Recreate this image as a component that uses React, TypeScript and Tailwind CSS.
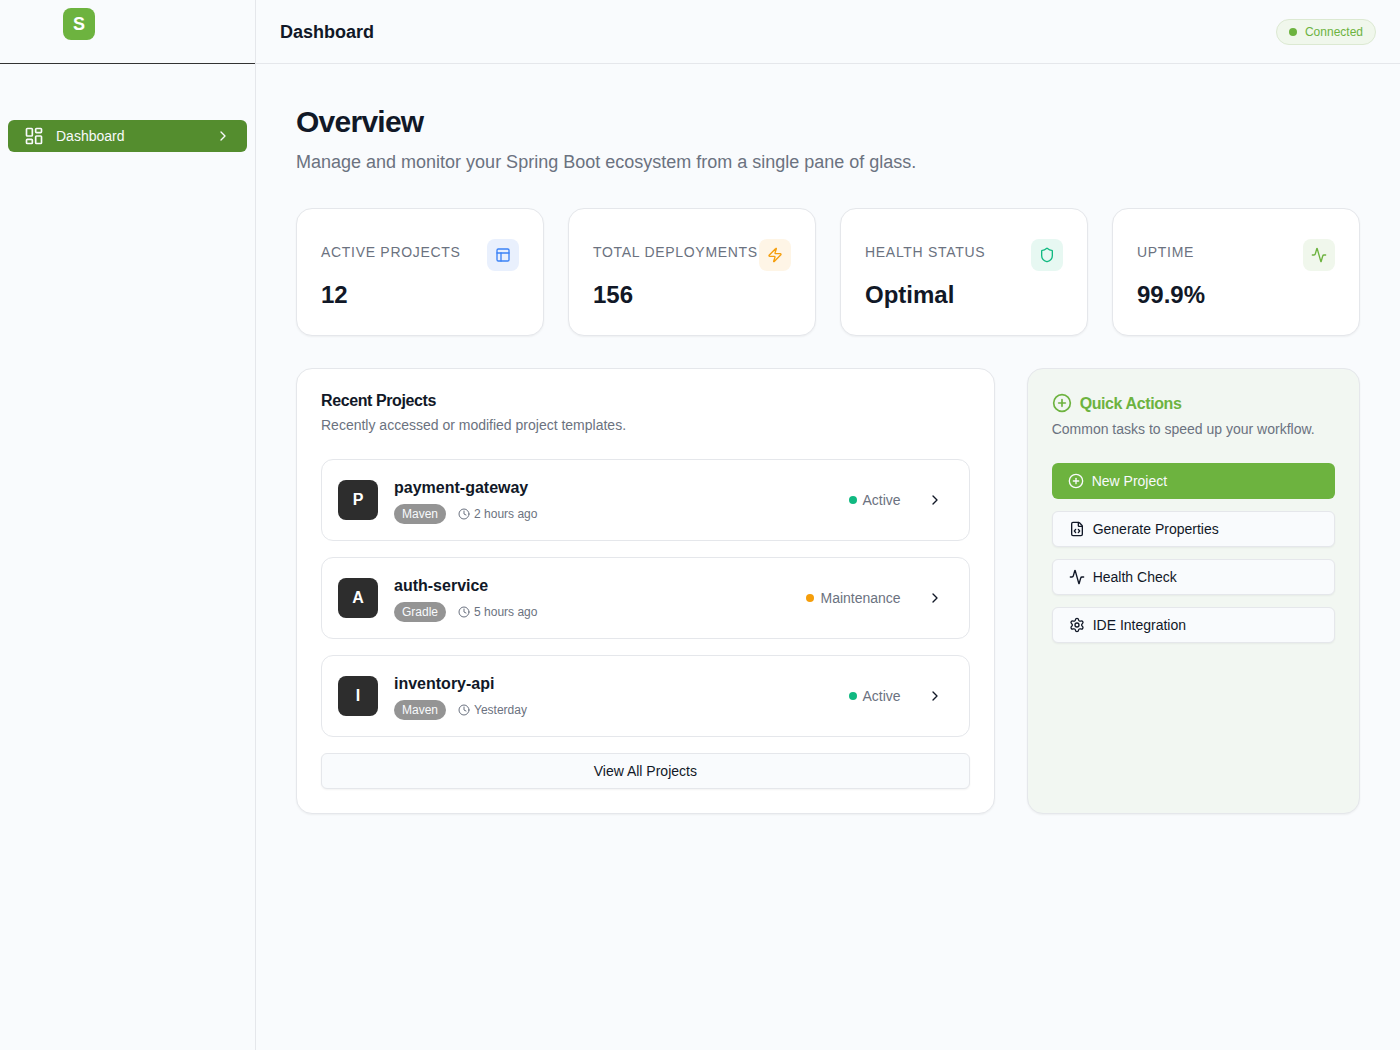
import { Activity, ChevronRight, CirclePlus, Clock, FileCode, LayoutDashboard, PanelsTopLeft, Settings, Shield, Zap } from "lucide-react";

const stats = [
  { label: "ACTIVE PROJECTS", value: "12", Icon: PanelsTopLeft, box: "bg-[#e9f0fd]", color: "text-[#3b82f6]" },
  { label: "TOTAL DEPLOYMENTS", value: "156", Icon: Zap, box: "bg-[#fef5e6]", color: "text-[#f59e0b]" },
  { label: "HEALTH STATUS", value: "Optimal", Icon: Shield, box: "bg-[#e7f8f2]", color: "text-[#10b981]" },
  { label: "UPTIME", value: "99.9%", Icon: Activity, box: "bg-[#f0f7ec]", color: "text-[#6db33f]" },
];

const projects = [
  { letter: "P", name: "payment-gateway", tool: "Maven", time: "2 hours ago", status: "Active", dot: "bg-[#10b981]" },
  { letter: "A", name: "auth-service", tool: "Gradle", time: "5 hours ago", status: "Maintenance", dot: "bg-[#f59e0b]" },
  { letter: "I", name: "inventory-api", tool: "Maven", time: "Yesterday", status: "Active", dot: "bg-[#10b981]" },
];

const actions = [
  { label: "Generate Properties", Icon: FileCode },
  { label: "Health Check", Icon: Activity },
  { label: "IDE Integration", Icon: Settings },
];

export default function App() {
  return (
    <div className="flex h-[1050px] bg-[#f9fbfd] font-['Liberation_Sans',Arial,sans-serif] text-[#111827] overflow-hidden">
      <aside className="w-[256px] shrink-0 border-r border-[#e5e7eb]">
        <div className="h-[64px] border-b border-[#333333] pt-2 pl-[63px]">
          <div className="w-8 h-8 rounded-lg bg-[#6db33f] flex items-center justify-center text-white font-bold text-[18px]">S</div>
        </div>
        <nav className="pt-[56px] px-2">
          <div className="h-8 rounded-md bg-[#548d2e] text-[#f8fafc] flex items-center pl-4 pr-5 text-sm">
            <LayoutDashboard className="w-5 h-5 mr-3 shrink-0" strokeWidth={2} />
            <span className="flex-1">Dashboard</span>
            <ChevronRight className="w-4 h-4 mr-[-4px]" />
          </div>
        </nav>
      </aside>

      <div className="flex-1 min-w-0">
        <header className="h-[64px] border-b border-[#e5e7eb] flex items-center justify-between pl-6 pr-6">
          <h1 className="text-lg font-semibold">Dashboard</h1>
          <div className="h-[26px] px-3 rounded-full bg-[#f0f7ec] border border-[#dce9d2] flex items-center gap-2 text-xs text-[#6db33f]">
            <span className="w-2 h-2 rounded-full bg-[#6db33f]" />
            Connected
          </div>
        </header>

        <main className="px-10 pt-10">
          <h2 className="text-3xl font-bold tracking-tight leading-9">Overview</h2>
          <p className="mt-2 text-lg leading-7 text-[#6b7280]">Manage and monitor your Spring Boot ecosystem from a single pane of glass.</p>

          <div className="mt-8 grid grid-cols-4 gap-6">
            {stats.map(({ label, value, Icon, box, color }) => (
              <div key={label} className="h-[128px] rounded-2xl bg-white border border-[#e5e7eb] shadow-xs px-6 pt-[30px]">
                <div className="flex justify-between items-start">
                  <span className="text-sm leading-[26px] tracking-wider text-[#6b7280] whitespace-nowrap">{label}</span>
                  <div className={`w-8 h-8 shrink-0 rounded-lg flex items-center justify-center ${box} ${color}`}>
                    <Icon className="w-4 h-4" />
                  </div>
                </div>
                <div className="mt-2 text-2xl leading-8 font-bold">{value}</div>
              </div>
            ))}
          </div>

          <div className="mt-8 grid grid-cols-3 gap-8">
            <section className="col-span-2 h-[446px] rounded-2xl bg-white border border-[#e5e7eb] shadow-xs px-6 pt-5">
              <h3 className="text-base leading-6 font-bold tracking-tight">Recent Projects</h3>
              <p className="mt-[2px] text-sm leading-5 text-[#6b7280]">Recently accessed or modified project templates.</p>
              <div className="mt-6 flex flex-col gap-4">
                {projects.map((p) => (
                  <div key={p.name} className="h-[82px] rounded-xl border border-[#e5e7eb] flex items-center pl-4 pr-[26px]">
                    <div className="w-10 h-10 rounded-lg bg-[#2d2d2d] text-white font-bold text-base flex items-center justify-center">{p.letter}</div>
                    <div className="ml-4 flex-1">
                      <div className="text-base leading-6 font-semibold">{p.name}</div>
                      <div className="mt-1 flex items-center text-xs text-[#6b7280]">
                        <span className="h-5 px-2 rounded-full bg-[#949494] text-[#f8fafc] flex items-center">{p.tool}</span>
                        <Clock className="w-3 h-3 ml-3 mr-1" />
                        <span>{p.time}</span>
                      </div>
                    </div>
                    <div className="flex items-center gap-1.5 text-sm text-[#6b7280]">
                      <span className={`w-2 h-2 rounded-full ${p.dot}`} />
                      {p.status}
                    </div>
                    <ChevronRight className="w-4 h-4 ml-[26px] text-[#111827]" />
                  </div>
                ))}
              </div>
              <button className="mt-4 w-full h-9 rounded-md bg-[#f9fbfd] border border-[#e5e7eb] shadow-xs text-sm">View All Projects</button>
            </section>

            <section className="h-[446px] rounded-2xl bg-[#f2f7f2] border border-[#e5e7eb] shadow-xs px-6 pt-[22px]">
              <h3 className="h-6 flex items-center gap-2 text-base leading-6 font-bold tracking-tight text-[#6db33f]">
                <CirclePlus className="w-5 h-5" />
                <span className="mt-[2px]">Quick Actions</span>
              </h3>
              <p className="mt-1 text-sm leading-5 text-[#6b7280]">Common tasks to speed up your workflow.</p>
              <div className="mt-6 flex flex-col gap-3">
                <div className="h-9 rounded-md bg-[#6db33f] text-[#f8fafc] flex items-center pl-4 gap-2 text-sm">
                  <CirclePlus className="w-4 h-4" />
                  New Project
                </div>
                {actions.map(({ label, Icon }) => (
                  <div key={label} className="h-9 rounded-md bg-[#f9fbfd] border border-[#e5e7eb] shadow-xs flex items-center pl-4 gap-2 text-sm">
                    <Icon className="w-4 h-4" />
                    {label}
                  </div>
                ))}
              </div>
            </section>
          </div>
        </main>
      </div>
    </div>
  );
}
